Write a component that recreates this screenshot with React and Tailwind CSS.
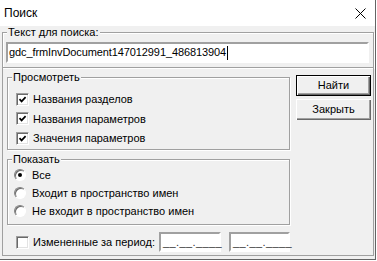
import React from 'react'

const font = { fontFamily: '"Liberation Sans", Arial, sans-serif' }

function Check({ checked }) {
  return (
    <span className="flex h-[13px] w-[13px] shrink-0 items-center justify-center border border-t-[#a0a0a0] border-l-[#a0a0a0] border-r-white border-b-white bg-white shadow-[inset_1px_1px_0_#696969,inset_-1px_-1px_0_#e3e3e3]">
      {checked && (
        <svg width="9" height="9" viewBox="0 0 9 9">
          <path d="M1.5 4.2 L3.6 6.4 L7.6 2.2" fill="none" stroke="#000" strokeWidth="1.7" />
        </svg>
      )}
    </span>
  )
}

function Radio({ checked }) {
  return (
    <span className="flex h-[12px] w-[12px] shrink-0 items-center justify-center rounded-full border border-t-[#808080] border-l-[#808080] border-r-white border-b-white bg-white shadow-[inset_1px_1px_0_#696969]">
      {checked && <span className="h-[4px] w-[4px] rounded-full bg-black" />}
    </span>
  )
}

function Group({ title, className, children }) {
  return (
    <fieldset className={`m-0 min-w-0 border border-[#a0a0a0] p-0 shadow-[1px_1px_0_#fff,inset_1px_1px_0_#fff] ${className}`}>
      <legend className="ml-[4px] bg-[#f0f0f0] px-[1px] text-[11px] leading-[13px] text-black">{title}</legend>
      {children}
    </fieldset>
  )
}

function Button({ label, primary }) {
  return (
    <div
      className={`flex h-[21px] w-[75px] items-center justify-center bg-[#f0f0f0] text-[11px] text-black ${
        primary
          ? 'border border-black shadow-[inset_1px_1px_0_#fff,inset_-1px_-1px_0_#696969,inset_-2px_-2px_0_#a0a0a0]'
          : 'shadow-[inset_1px_1px_0_#fff,inset_-1px_-1px_0_#696969,inset_-2px_-2px_0_#a0a0a0]'
      }`}
    >
      {label}
    </div>
  )
}

function DateBox({ w }) {
  return (
    <div className={`flex h-[20px] ${w} items-center border-2 border-t-[#a0a0a0] border-l-[#a0a0a0] border-r-white border-b-white bg-white pl-[2px] text-[11px] leading-none tracking-[0.4px] text-[#333]`}>
      __.__.____
    </div>
  )
}

export default function App() {
  return (
    <div className="bg-white" style={font}>
      <div className="flex h-[260px] w-[376px] flex-col border-r border-b border-[#646464] bg-[#f0f0f0]">
        <div className="flex h-[26px] shrink-0 items-center justify-between bg-white pl-[4px] pr-[9px]">
          <span className="text-[12px] text-black">Поиск</span>
          <svg width="11" height="11" viewBox="0 0 11 11">
            <path d="M0.5 0.5 L10.5 10.5 M10.5 0.5 L0.5 10.5" stroke="#000" strokeWidth="1" />
          </svg>
        </div>

        <Group title="Текст для поиска:" className="ml-[2px] w-[372px] pb-[4px]">
          <div className="ml-[3px] mt-[3px] flex h-[21px] w-[363px] items-center border-2 border-t-[#a0a0a0] border-l-[#a0a0a0] border-r-white border-b-white bg-white pl-[1px] text-[11px] tracking-[-0.1px] text-black">
            <span>gdc_frmInvDocument147012991_486813904</span>
            <span className="ml-[1px] h-[14px] w-[1px] bg-black" />
          </div>
        </Group>

        <div className="ml-[2px] flex h-[188px] w-[372px] border-x border-b border-[#a0a0a0]">
          <div className="flex w-[287px] flex-col">
            <Group title="Просмотреть" className="ml-[4px] mt-[3px] w-[283px] pb-[1px]">
              <div className="mt-[5px] flex flex-col text-[11px] text-black">
                {['Названия разделов', 'Названия параметров', 'Значения параметров'].map((t, i) => (
                  <div key={t} className={`flex items-center gap-[4px] pl-[8px] ${i === 0 ? 'h-[20px]' : 'h-[19.5px]'}`}>
                    <Check checked />
                    <span>{t}</span>
                  </div>
                ))}
              </div>
            </Group>

            <Group title="Показать" className="ml-[4px] mt-[3px] w-[283px] pb-[4px]">
              <div className="flex flex-col text-[11px] text-black">
                {['Все', 'Входит в пространство имен', 'Не входит в пространство имен'].map((t, i) => (
                  <div key={t} className="flex h-[18px] items-center gap-[6px] pl-[6px]">
                    <Radio checked={i === 0} />
                    <span>{t}</span>
                  </div>
                ))}
              </div>
            </Group>

            <div className="mt-[7px] flex h-[20px] items-center pl-[13px] text-[11px] text-black">
              <Check />
              <span className="ml-[4px] w-[126px]">Измененные за период:</span>
              <DateBox w="w-[62px]" />
              <div className="ml-[8px]">
                <DateBox w="w-[61px]" />
              </div>
            </div>
          </div>

          <div className="ml-[6px] flex flex-col gap-[3px] pt-[7px]">
            <Button label="Найти" primary />
            <Button label="Закрыть" />
          </div>
        </div>
      </div>
    </div>
  )
}
